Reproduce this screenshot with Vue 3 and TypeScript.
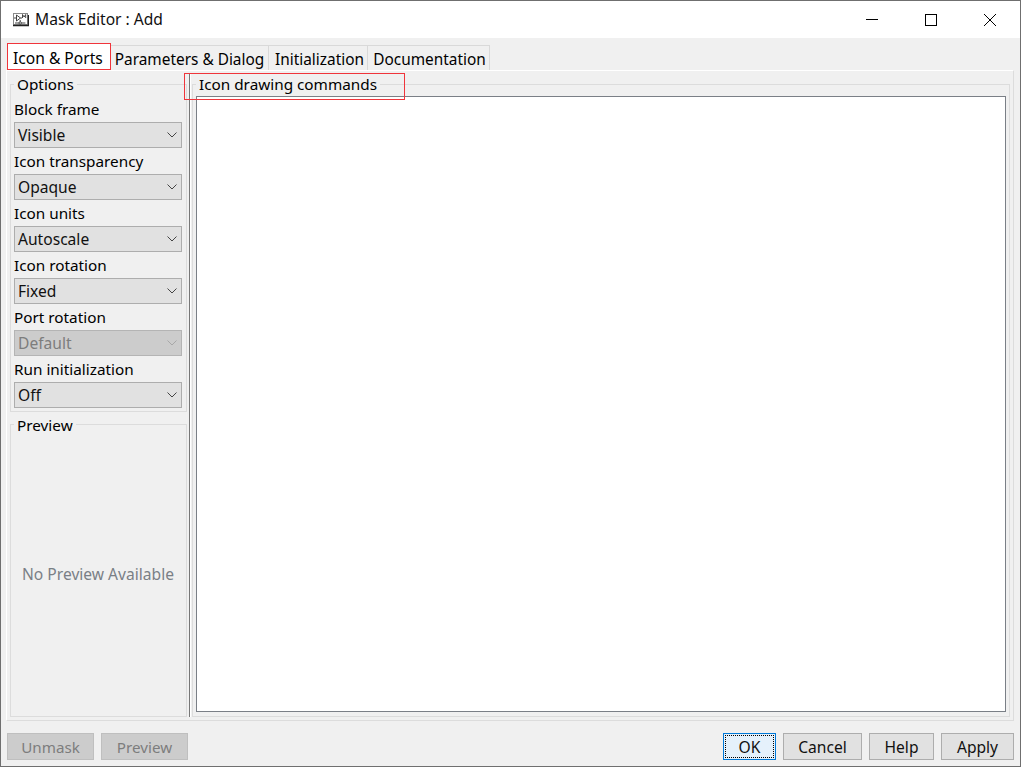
<script setup lang="ts">
interface Option { label: string; value: string; disabled?: boolean }
const options: Option[] = [
  { label: 'Block frame', value: 'Visible' },
  { label: 'Icon transparency', value: 'Opaque' },
  { label: 'Icon units', value: 'Autoscale' },
  { label: 'Icon rotation', value: 'Fixed' },
  { label: 'Port rotation', value: 'Default', disabled: true },
  { label: 'Run initialization', value: 'Off' },
]
const tabs = ['Parameters & Dialog', 'Initialization', 'Documentation']
</script>

<template>
  <div class="window">
    <header class="titlebar">
      <svg class="app-icon" width="16" height="16" viewBox="0 0 16 16">
        <rect x="0.5" y="1.5" width="14" height="11" fill="#fff" stroke="#8a8a8a" />
        <path d="M0 13.5h15.5V3" fill="none" stroke="#222" stroke-width="1.4" />
        <path d="M1 6h2.5M3.5 3v6l4-3-4-3M7.5 6h1.5M9.5 6V2.5l1.6 2.5 1.6-2.5V6M2 11h4M6 11a1.2 1.2 0 1 0 2.4 0a1.2 1.2 0 1 0-2.4 0M8.4 11h4M7.2 9.8V8" fill="none" stroke="#333" stroke-width="0.9" />
      </svg>
      <span class="title">Mask Editor : Add</span>
      <div class="controls">
        <svg width="14" height="14" viewBox="0 0 14 14"><path d="M1 6.5h12" stroke="#000" /></svg>
        <svg width="14" height="14" viewBox="0 0 14 14"><rect x="1.5" y="1.5" width="11" height="11" fill="none" stroke="#000" /></svg>
        <svg width="14" height="14" viewBox="0 0 14 14"><path d="M1 1l12 12M13 1L1 13" stroke="#000" /></svg>
      </div>
    </header>

    <main class="body">
      <nav class="tabs">
        <div class="tab active">Icon &amp; Ports</div>
        <div v-for="t in tabs" :key="t" class="tab">{{ t }}</div>
      </nav>

      <section class="pane">
        <aside class="left">
          <fieldset class="group options">
            <legend>Options</legend>
            <div v-for="o in options" :key="o.label" class="field">
              <div class="label">{{ o.label }}</div>
              <div class="select" :class="{ disabled: o.disabled }">
                <span>{{ o.value }}</span>
                <svg width="10" height="6" viewBox="0 0 10 6"><path d="M0.5 0.5L5 5l4.5-4.5" fill="none" stroke="currentColor" /></svg>
              </div>
            </div>
          </fieldset>
          <fieldset class="group preview">
            <legend>Preview</legend>
            <div class="no-preview">No Preview Available</div>
          </fieldset>
        </aside>
        <div class="splitter"></div>
        <fieldset class="group commands">
          <legend>Icon drawing commands</legend>
          <div class="editor"></div>
        </fieldset>
      </section>

      <footer class="actions">
        <div class="btn-group">
          <button class="btn off unmask">Unmask</button>
          <button class="btn off previewbtn">Preview</button>
        </div>
        <div class="btn-group right">
          <button class="btn ok"><span>OK</span></button>
          <button class="btn cancel">Cancel</button>
          <button class="btn help">Help</button>
          <button class="btn apply">Apply</button>
        </div>
      </footer>

      <div class="mark mark-tab"></div>
      <div class="mark mark-cmd"></div>
    </main>
  </div>
</template>

<style>
html, body { margin: 0; background: #f0f0f0; }
</style>

<style scoped>
.window {
  position: relative;
  box-sizing: border-box;
  width: 1021px;
  height: 767px;
  border: 1px solid #6f6f6f;
  background: #f0f0f0;
  display: flex;
  flex-direction: column;
  font-family: "Noto Sans", "Open Sans", sans-serif;
  font-size: 15.6px;
  color: #000;
  overflow: hidden;
}
.titlebar {
  height: 37px;
  flex: none;
  background: #fff;
  display: flex;
  align-items: center;
  padding-left: 12px;
}
.app-icon { margin-right: 7px; }
.title { color: #111; line-height: 20px; margin-top: -2px; margin-left: -1px; }
.controls {
  margin-left: auto;
  display: flex;
  gap: 45px;
  padding-right: 23px;
}
.body { position: relative; flex: 1; display: flex; flex-direction: column; padding: 0 5px; min-height: 0; }
.tabs { display: flex; height: 32px; align-items: flex-end; padding-left: 1px; flex: none; }
.tab {
  box-sizing: border-box;
  height: 25px;
  line-height: 27px;
  font-size: 15.4px;
  text-align: center;
  border: 1px solid #d9d9d9;
  border-left: 0;
  border-bottom: 0;
  white-space: nowrap;
}
.tab:nth-child(2) { width: 158px; }
.tab:nth-child(3) { width: 99px; padding-left: 3px; }
.tab:nth-child(4) { width: 122px; padding-left: 2px; }
.tab.active {
  width: 103px;
  height: 26px;
  line-height: 28px;
  font-size: 15.6px;
  text-align: left;
  background: #fff;
  padding-left: 6px;
  margin-right: 1px;
  border: 0;
}
.pane {
  box-sizing: border-box;
  height: 651px;
  flex: none;
  margin-right: 1px;
  border: 1px solid #dcdcdc;
  border-top-color: #fff;
  border-left-color: #fff;
  background: #f0f0f0;
  display: flex;
  padding: 2px 3px 3px 3px;
}
.left { width: 177px; flex: none; display: flex; flex-direction: column; gap: 2px; }
.group {
  margin: 0;
  padding: 0;
  box-sizing: border-box;
  border: 1px solid #dcdcdc;
  min-width: 0;
}
.group legend { padding: 0 3px; line-height: 22px; height: 22px; font-size: 15.3px; }
.options { height: 339px; padding: 1px 3px 0 3px; }
.field { height: 52px; }
.label { height: 26px; line-height: 26px; font-size: 15.3px; }
.select {
  box-sizing: border-box;
  height: 26px;
  width: 168px;
  background: #e1e1e1;
  border: 1px solid #adadad;
  display: flex;
  align-items: center;
  justify-content: space-between;
  padding: 0 4px 0 3px;
  color: #111;
}
.select svg { color: #444; }
.select.disabled { background: #cccccc; color: #7d7d7d; border-color: #b4b4b4; }
.select.disabled svg { color: #a8a8a8; }
.preview { flex: 1; position: relative; }
.preview legend { margin-left: 3px; line-height: 22px; height: 20px; }
.no-preview {
  position: absolute;
  left: 11px;
  top: 129px;
  color: #7a7f86;
  white-space: nowrap;
}
.splitter {
  width: 2px;
  margin: 0 1px 0 2px;
  background: #777;
  flex: none;
  box-sizing: border-box;
  border-right: 1px solid #fff;
}
.commands {
  flex: 1;
  padding: 1px 3px 3px 3px;
  display: flex;
  flex-direction: column;
}
.editor {
  box-sizing: border-box;
  height: 616px;
  background: #fff;
  border: 1px solid #7a7f86;
}
.actions {
  flex: 1;
  display: flex;
  justify-content: space-between;
  padding: 12px 1px 0 1px;
}
.btn-group { display: flex; gap: 7px; }
.btn {
  box-sizing: border-box;
  height: 27px;
  font: inherit;
  line-height: 24px;
  color: #111;
  background: #e1e1e1;
  border: 1px solid #adadad;
  padding: 0;
  cursor: default;
}
.btn.off { background: #cccccc; color: #7d7d7d; border-color: #bfbfbf; font-size: 15.2px; }
.unmask, .previewbtn { width: 87px; }
.ok {
  width: 53px;
  background: #e5f1fb;
  border: 1px solid #0078d7;
  padding: 1px;
}
.ok span {
  display: block;
  box-sizing: border-box;
  height: 100%;
  line-height: 22px;
  border: 1px dotted #000;
}
.cancel { width: 79px; }
.help { width: 65px; }
.apply { width: 73px; }
.mark { position: absolute; border: 1px solid #f0353b; box-sizing: border-box; pointer-events: none; }
.mark-tab { left: 6px; top: 5px; width: 104px; height: 27px; }
.mark-cmd { left: 183px; top: 35px; width: 221px; height: 27px; }
</style>
